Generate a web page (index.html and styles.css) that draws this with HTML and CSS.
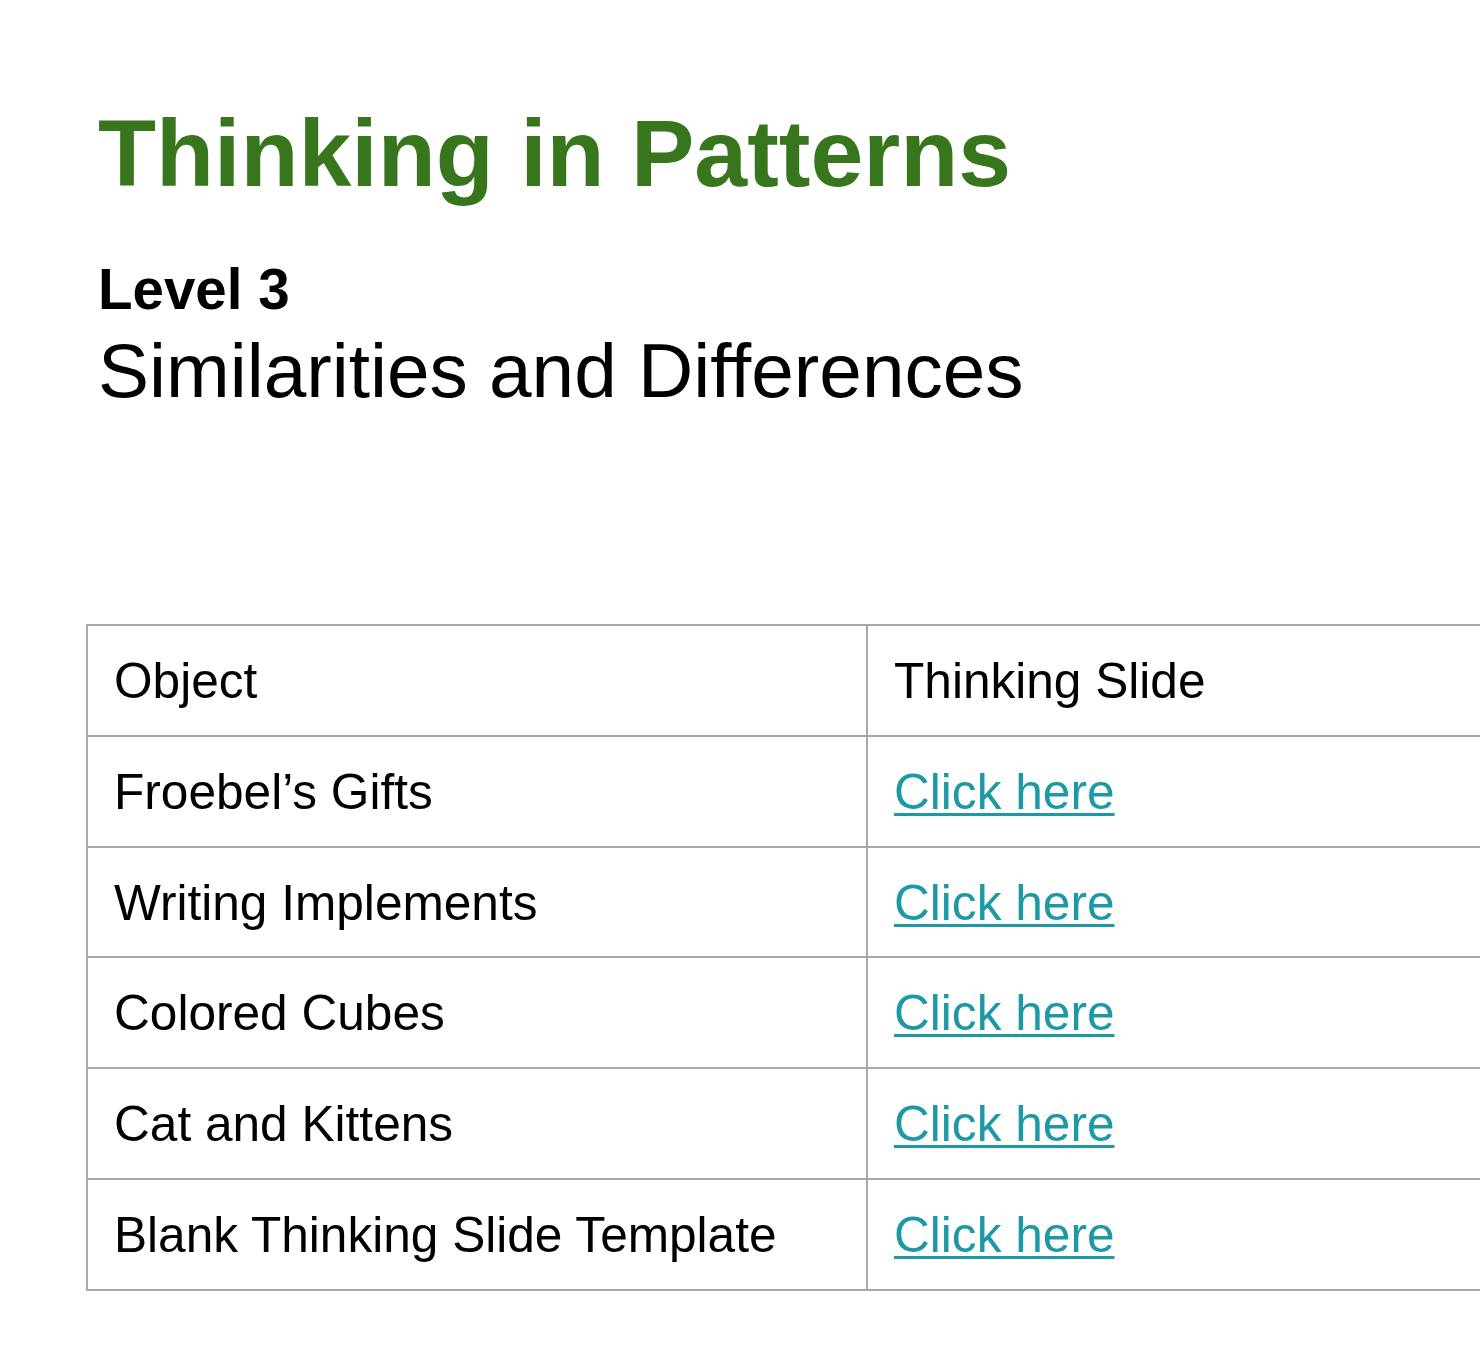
FILE: index.html
```html
<!DOCTYPE html>
<html lang="en">
<head>
<meta charset="utf-8">
<title>Thinking in Patterns</title>
<link rel="stylesheet" href="styles.css">
</head>
<body>
<main class="page">
  <h1 class="title">Thinking in Patterns</h1>
  <p class="level">Level 3</p>
  <p class="subtitle">Similarities and Differences</p>
  <table class="slides">
    <tr><td>Object</td><td>Thinking Slide</td></tr>
    <tr><td>Froebel’s Gifts</td><td><a href="#">Click here</a></td></tr>
    <tr><td>Writing Implements</td><td><a href="#">Click here</a></td></tr>
    <tr><td>Colored Cubes</td><td><a href="#">Click here</a></td></tr>
    <tr><td>Cat and Kittens</td><td><a href="#">Click here</a></td></tr>
    <tr><td>Blank Thinking Slide Template</td><td><a href="#">Click here</a></td></tr>
  </table>
</main>
</body>
</html>
```
FILE: styles.css
```css
html, body {
  margin: 0;
  padding: 0;
  background: #fff;
  overflow: hidden;
}
body {
  font-family: "Liberation Sans", Arial, sans-serif;
  color: #000;
}
.page {
  padding: 98px 0 0 98px;
}
.title {
  margin: 0;
  font-size: 95px;
  line-height: 110px;
  font-weight: bold;
  color: #38761d;
}
.level {
  margin: 50px 0 0 0;
  font-size: 56.5px;
  line-height: 64px;
  font-weight: bold;
}
.subtitle {
  margin: 5px 0 0 0;
  font-size: 76.5px;
  line-height: 88px;
}
.slides {
  margin: 209px 0 0 -12px;
  border-collapse: collapse;
  width: 1562px;
  table-layout: fixed;
}
.slides td {
  border: 2px solid #a8a8a8;
  font-size: 49.6px;
  line-height: 56px;
  padding: 27px 20px 25.8px 26px;
  white-space: nowrap;
}
.slides a {
  color: #1c99a5;
  text-decoration: underline;
  text-decoration-thickness: 3px;
  text-underline-offset: 4px;
}
```
